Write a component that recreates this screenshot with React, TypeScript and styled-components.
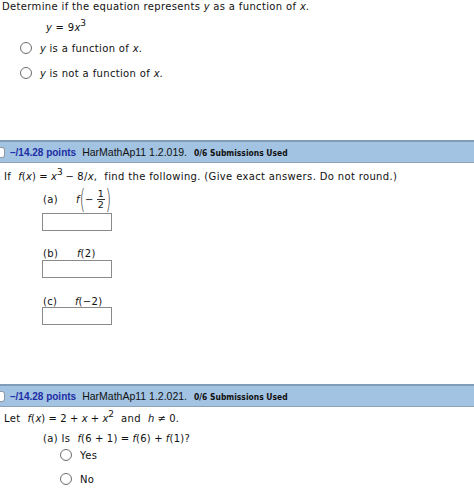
import React, { FC } from 'react'
import styled, { createGlobalStyle } from 'styled-components'

const GlobalStyle = createGlobalStyle`
	html, body {
		margin: 0;
		padding: 0;
		background: #ffffff;
	}
	body {
		font-family: 'DejaVu Sans', Verdana, sans-serif;
		font-size: 10px;
		letter-spacing: 0.35px;
		color: #111;
	}
`

const Page = styled.div`
	width: 474px;
	height: 501px;
	overflow: hidden;
	display: flex;
	flex-direction: column;
`

const Line = styled.div<{ $indent?: number; $top?: number; $h?: number }>`
	display: flex;
	align-items: center;
	height: ${(p) => p.$h ?? 12}px;
	padding-left: ${(p) => p.$indent ?? 2}px;
	margin-top: ${(p) => p.$top ?? 0}px;
	white-space: pre;
`

const I = styled.i`
	font-style: italic;
	letter-spacing: 0;
`

const Sup = styled.span`
	font-size: 9px;
	position: relative;
	top: -4px;
	letter-spacing: 0;
`

const Gap = styled.span<{ $w: number }>`
	display: inline-block;
	width: ${(p) => p.$w}px;
`

const Radio = styled.span`
	display: inline-block;
	box-sizing: border-box;
	width: 12px;
	height: 12px;
	border-radius: 50%;
	border: 1px solid #6e6e6e;
	background: radial-gradient(circle at 50% 40%, #ffffff 55%, #e6e6e6 100%);
	margin-right: 8px;
	flex-shrink: 0;
`

const Bar = styled.div<{ $top: number }>`
	margin-top: ${(p) => p.$top}px;
	height: 23px;
	box-sizing: border-box;
	background: #a2c3e1;
	border-top: 2px solid #7f9cb9;
	border-bottom: 1px solid #8da3b8;
	display: flex;
	align-items: center;
	white-space: nowrap;
	letter-spacing: 0;
`

const Tab = styled.span`
	display: inline-block;
	box-sizing: border-box;
	width: 5px;
	height: 11px;
	background: #ffffff;
	border: 1px solid #8e9aa6;
	border-left: none;
	border-radius: 0 3px 3px 0;
	margin-right: 5px;
`

const Points = styled.span`
	font-family: 'Liberation Sans', Arial, sans-serif;
	font-weight: bold;
	font-size: 10px;
	color: #1d2ea6;
	margin-right: 6px;
`

const Code = styled.span`
	font-family: 'Liberation Sans', Arial, sans-serif;
	font-size: 10.5px;
	color: #111;
	margin-right: 7px;
`

const Used = styled.span`
	display: inline-block;
	font-family: 'DejaVu Sans', sans-serif;
	font-weight: bold;
	font-size: 9.5px;
	color: #111;
	transform: scaleX(0.8);
	transform-origin: left center;
`

const Label = styled.span<{ $w: number }>`
	display: inline-block;
	width: ${(p) => p.$w}px;
`

const Paren = styled.span`
	display: inline-block;
	font-size: 27px;
	line-height: 24px;
	transform: scaleX(0.5);
	font-weight: 300;
	color: #333;
	letter-spacing: 0;
	margin: 0 -3px;
`

const Frac = styled.span`
	display: inline-flex;
	flex-direction: column;
	align-items: center;
	font-size: 9.5px;
	line-height: 10px;
	margin: 0 1px;
	letter-spacing: 0;
`

const Num = styled.span`
	border-bottom: 1px solid #333;
	padding: 0 1px;
`

const AnswerBox = styled.div<{ $top: number }>`
	margin: ${(p) => p.$top}px 0 0 42px;
	width: 70px;
	height: 18px;
	box-sizing: border-box;
	border: 1px solid #8a8a8a;
	background: #fff;
`

const Header: FC<{ top: number; code: string }> = ({ top, code }) => (
	<Bar $top={top}>
		<Tab />
		<Points>–/14.28 points</Points>
		<Code>{code}</Code>
		<Used>0/6 Submissions Used</Used>
	</Bar>
)

const App: FC = () => (
	<Page>
		<GlobalStyle />
		<Line $h={12}>
			{'Determine if the equation represents '}
			<I>y</I>
			{' as a function of '}
			<I>x</I>.
		</Line>
		<Line $indent={46} $top={9} $h={12}>
			<I>y</I>
			{' = 9'}
			<I>x</I>
			<Sup>3</Sup>
		</Line>
		<Line $indent={20} $top={8} $h={14}>
			<Radio />
			<I>y</I>
			{' is a function of '}
			<I>x</I>.
		</Line>
		<Line $indent={20} $top={11} $h={14}>
			<Radio />
			<I>y</I>
			{' is not a function of '}
			<I>x</I>.
		</Line>

		<Header top={60} code="HarMathAp11 1.2.019." />

		<Line $indent={4} $top={7} $h={12}>
			{'If  '}
			<I>f</I>(<I>x</I>)<Gap $w={3} />=<Gap $w={3} />
			<I>x</I>
			<Sup>3</Sup>
			<Gap $w={3} />−<Gap $w={3} />8/<I>x</I>
			{',  find the following. (Give exact answers. Do not round.)'}
		</Line>
		<Line $indent={43} $top={5} $h={24}>
			<Label $w={33}>(a)</Label>
			<I>f</I>
			<Paren>(</Paren>
			<Gap $w={1} />−<Gap $w={2} />
			<Frac>
				<Num>1</Num>
				<span>2</span>
			</Frac>
			<Paren>)</Paren>
		</Line>
		<AnswerBox $top={2} />
		<Line $indent={43} $top={16} $h={12}>
			<Label $w={34}>(b)</Label>
			<I>f</I>(2)
		</Line>
		<AnswerBox $top={1} />
		<Line $indent={43} $top={17} $h={12}>
			<Label $w={32}>(c)</Label>
			<I>f</I>(−2)
		</Line>
		<AnswerBox $top={0} />

		<Header top={59} code="HarMathAp11 1.2.021." />

		<Line $indent={4} $top={5} $h={12}>
			{'Let  '}
			<I>f</I>(<I>x</I>)<Gap $w={3} />=<Gap $w={3} />2<Gap $w={3} />+<Gap $w={3} />
			<I>x</I>
			<Gap $w={3} />+<Gap $w={3} />
			<I>x</I>
			<Sup>2</Sup>
			{'  and  '}
			<I>h</I>
			<Gap $w={3} />≠<Gap $w={3} />0.
		</Line>
		<Line $indent={43} $top={8} $h={12}>
			{'(a) Is  '}
			<I>f</I>(6<Gap $w={3} />+<Gap $w={3} />1)<Gap $w={3} />=<Gap $w={3} />
			<I>f</I>(6)<Gap $w={3} />+<Gap $w={3} />
			<I>f</I>(1)?
		</Line>
		<Line $indent={60} $top={4} $h={14}>
			<Radio />
			Yes
		</Line>
		<Line $indent={60} $top={10} $h={14}>
			<Radio />
			No
		</Line>
	</Page>
)

export default App
